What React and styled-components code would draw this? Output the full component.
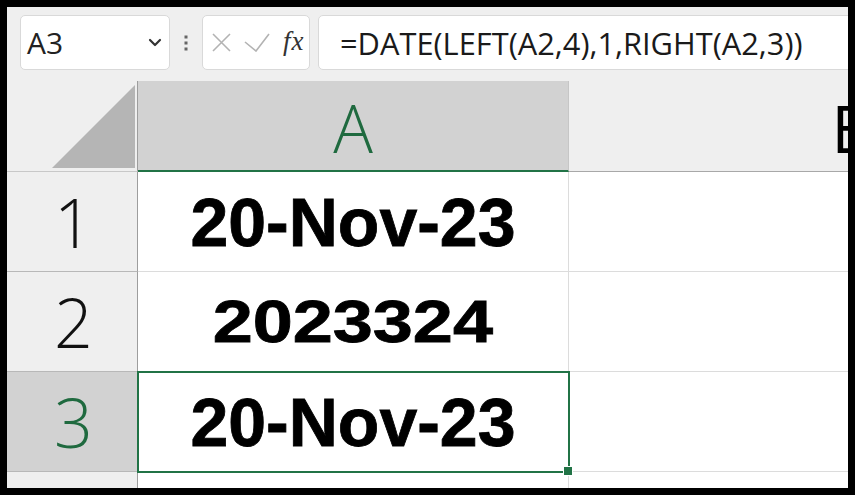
import React from "react";
import styled, { createGlobalStyle } from "styled-components";

const GREEN = "#217346";
const GREEN_TEXT = "#1f6a3f";

const GlobalStyle = createGlobalStyle`
    html, body {
        margin: 0;
        padding: 0;
        background: #000;
    }
    * {
        box-sizing: border-box;
    }
`;

const Frame = styled.div`
    width: 855px;
    height: 495px;
    padding: 7px;
    background: #000;
`;

const Screen = styled.div`
    height: 100%;
    display: flex;
    flex-direction: column;
    background: #efefef;
    overflow: hidden;
    font-family: "Open Sans", "Noto Sans", sans-serif;
`;

const Toolbar = styled.div`
    display: flex;
    align-items: stretch;
    height: 74px;
    padding: 8px 0 11px 13px;
    flex-shrink: 0;
`;

const Box = styled.div`
    display: flex;
    align-items: center;
    background: #fff;
    border: 1px solid #d9d9d9;
    border-radius: 5px;
`;

const NameBox = styled(Box)`
    width: 150px;
    padding: 0 7px 0 6px;
    justify-content: space-between;
    font-size: 30px;
    color: #222;
`;

const Dots = styled.div`
    width: 32px;
    display: flex;
    align-items: center;
    justify-content: center;
`;

const FxBox = styled(Box)`
    width: 108px;
    padding: 0 0 0 9px;
    gap: 13px;
`;

const Fx = styled.span`
    font-family: "Liberation Serif", serif;
    font-style: italic;
    font-size: 27px;
    color: #333;
    margin-top: -2px;
    letter-spacing: 1px;
`;

const FormulaBox = styled(Box)`
    flex: 1;
    margin-left: 8px;
    margin-right: -12px;
    padding-left: 21px;
    font-size: 30.8px;
    color: #1a1a1a;
    white-space: nowrap;
`;

const Sheet = styled.div`
    display: grid;
    grid-template-columns: 131px 431px 568px;
    grid-template-rows: 91px repeat(4, 100px);
`;

const Corner = styled.div`
    display: flex;
    align-items: flex-end;
    justify-content: flex-end;
    padding: 0 2px 3px 0;
    background: #efefef;
    border-right: 1px solid #9d9d9d;
    border-bottom: 1px solid #c8c8c8;
`;

const Triangle = styled.div`
    width: 83px;
    height: 83px;
    background: #b5b5b5;
    clip-path: polygon(100% 0, 100% 100%, 0 100%);
`;

const ColHeader = styled.div`
    display: flex;
    align-items: center;
    justify-content: center;
    font-size: 66px;
    font-weight: ${(props) => (props.active ? 300 : 400)};
    padding-top: 2px;
    background: ${(props) => (props.active ? "#d2d2d2" : "#efefef")};
    color: ${(props) => (props.active ? GREEN_TEXT : "#000")};
    border-right: 1px solid #c6c6c6;
    border-bottom: ${(props) => (props.active ? `2px solid ${GREEN}` : "1px solid #a8a8a8")};
`;

const RowHeader = styled.div`
    display: flex;
    align-items: center;
    justify-content: center;
    padding-left: 3px;
    font-size: 68px;
    font-weight: 300;
    background: ${(props) => (props.active ? "#d2d2d2" : "#efefef")};
    color: ${(props) => (props.active ? GREEN_TEXT : "#111")};
    border-right: 1px solid ${(props) => (props.active ? GREEN : "#9d9d9d")};
    border-bottom: 1px solid #b8b8b8;
`;

const Cell = styled.div`
    position: ${(props) => (props.selected ? "relative" : "static")};
    display: flex;
    align-items: center;
    justify-content: center;
    background: #fff;
    border-right: 1px solid #dcdcdc;
    border-bottom: 1px solid #dcdcdc;
    outline: ${(props) => (props.selected ? `2px solid ${GREEN}` : "none")};
    outline-offset: -1px;

    &::after {
        content: "";
        display: ${(props) => (props.selected ? "block" : "none")};
        position: absolute;
        right: -5px;
        bottom: -5px;
        width: 8px;
        height: 8px;
        background: ${GREEN};
        border: 1px solid #fff;
    }
`;

const Value = styled.span`
    display: inline-block;
    font-family: "Liberation Sans", Arial, sans-serif;
    font-weight: 700;
    font-size: ${(props) => (props.stretched ? "60px" : "68px")};
    transform: ${(props) => (props.stretched ? "scaleX(1.2)" : "none")};
    -webkit-text-stroke: 0.8px #000;
    color: #000;
`;

const Chevron = () => (
    <svg width="14" height="9" viewBox="0 0 14 9">
        <path d="M2 2 L7 7 L12 2" fill="none" stroke="#333" strokeWidth="2.2" strokeLinecap="round" strokeLinejoin="round" />
    </svg>
);

const VDots = () => (
    <svg width="4" height="16" viewBox="0 0 4 16">
        <rect x="0.5" y="0.5" width="3" height="3" fill="#666" />
        <rect x="0.5" y="6.5" width="3" height="3" fill="#666" />
        <rect x="0.5" y="12.5" width="3" height="3" fill="#666" />
    </svg>
);

const Cancel = () => (
    <svg width="19" height="19" viewBox="0 0 19 19">
        <path d="M1 1 L18 18 M18 1 L1 18" stroke="#b3b3b3" strokeWidth="1.6" fill="none" />
    </svg>
);

const Enter = () => (
    <svg width="26" height="19" viewBox="0 0 26 19">
        <path d="M1 9 L12 18 L25 1" stroke="#b3b3b3" strokeWidth="1.6" fill="none" />
    </svg>
);

const rows = [
    { n: 1, value: "20-Nov-23" },
    { n: 2, value: "2023324", stretched: true },
    { n: 3, value: "20-Nov-23", active: true },
    { n: 4, value: "" },
];

const App = () => {
    return (
        <Frame>
            <GlobalStyle />
            <Screen>
                <Toolbar>
                    <NameBox>
                        <span>A3</span>
                        <Chevron />
                    </NameBox>
                    <Dots>
                        <VDots />
                    </Dots>
                    <FxBox>
                        <Cancel />
                        <Enter />
                        <Fx>fx</Fx>
                    </FxBox>
                    <FormulaBox>=DATE(LEFT(A2,4),1,RIGHT(A2,3))</FormulaBox>
                </Toolbar>
                <Sheet>
                    <Corner>
                        <Triangle />
                    </Corner>
                    <ColHeader active>A</ColHeader>
                    <ColHeader>B</ColHeader>
                    {rows.map((row) => (
                        <React.Fragment key={row.n}>
                            <RowHeader active={row.active}>{row.n < 4 ? row.n : ""}</RowHeader>
                            <Cell selected={row.active}>
                                {row.value && <Value stretched={row.stretched}>{row.value}</Value>}
                            </Cell>
                            <Cell />
                        </React.Fragment>
                    ))}
                </Sheet>
            </Screen>
        </Frame>
    );
};

export default App;
